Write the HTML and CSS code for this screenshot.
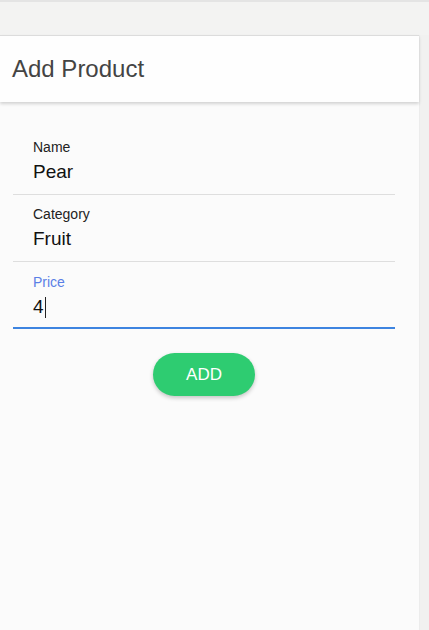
FILE: index.html
```html
<!DOCTYPE html>
<html>
<head>
<meta charset="utf-8">
<link rel="stylesheet" href="styles.css">
</head>
<body>
<div class="topbar"></div>
<div class="row">
  <div class="main">
    <div class="header"><h1 class="title">Add Product</h1></div>
    <div class="content">
      <div class="form">
        <div class="field">
          <div class="label">Name</div>
          <div class="value">Pear</div>
        </div>
        <div class="field">
          <div class="label">Category</div>
          <div class="value">Fruit</div>
        </div>
        <div class="field focused">
          <div class="label">Price</div>
          <div class="value">4<span class="caret"></span></div>
        </div>
        <div class="actions"><button class="btn">ADD</button></div>
      </div>
    </div>
  </div>
  <div class="side"></div>
</div>
</body>
</html>
```
FILE: styles.css
```css
html, body {
  margin: 0;
  padding: 0;
  height: 100%;
}
body {
  background: #f2f2f1;
  font-family: "Liberation Sans", Arial, sans-serif;
  display: flex;
  flex-direction: column;
}
.topbar {
  height: 33px;
  border-top: 2px solid #e4e4e4;
  background: #f3f3f2;
  flex: none;
}
.row {
  flex: 1;
  display: flex;
}
.main {
  width: 419px;
  background: #fbfbfb;
  display: flex;
  flex-direction: column;
}
.side {
  flex: 1;
  background: #f1f1f0;
  border-left: 1px solid #ececec;
}
.header {
  height: 66px;
  background: #fefefe;
  border-top: 1px solid #dcdcdc;
  box-shadow: 0 2px 3px rgba(0,0,0,0.16);
  display: flex;
  align-items: center;
  position: relative;
  z-index: 1;
}
.title {
  margin: 0 0 0 12px;
  font-size: 24px;
  font-weight: normal;
  color: #444;
}
.content {
  flex: 1;
  padding-top: 26px;
}
.form {
  width: 382px;
  margin-left: 13px;
}
.field {
  padding: 11px 0 10px 20px;
  border-bottom: 1px solid #dedede;
}
.label {
  font-size: 14px;
  line-height: 16px;
  color: #222;
  margin-bottom: 5px;
}
.value {
  font-size: 19px;
  line-height: 24px;
  color: #111;
  display: flex;
  align-items: center;
}
.caret {
  display: inline-block;
  width: 1px;
  height: 21px;
  background: #222;
  margin-left: 1px;
}
.field.focused {
  padding-top: 12px;
  padding-bottom: 8px;
  border-bottom: 2px solid #3d84e0;
}
.field.focused .label {
  color: #5a7fe6;
}
.actions {
  display: flex;
  justify-content: center;
  margin-top: 24px;
}
.btn {
  width: 102px;
  height: 43px;
  border: none;
  border-radius: 22px;
  background: #2ecc71;
  color: #fff;
  font-family: "Liberation Sans", Arial, sans-serif;
  font-size: 17px;
  box-shadow: 0 2px 4px rgba(0,0,0,0.22);
  padding: 0;
}
```
